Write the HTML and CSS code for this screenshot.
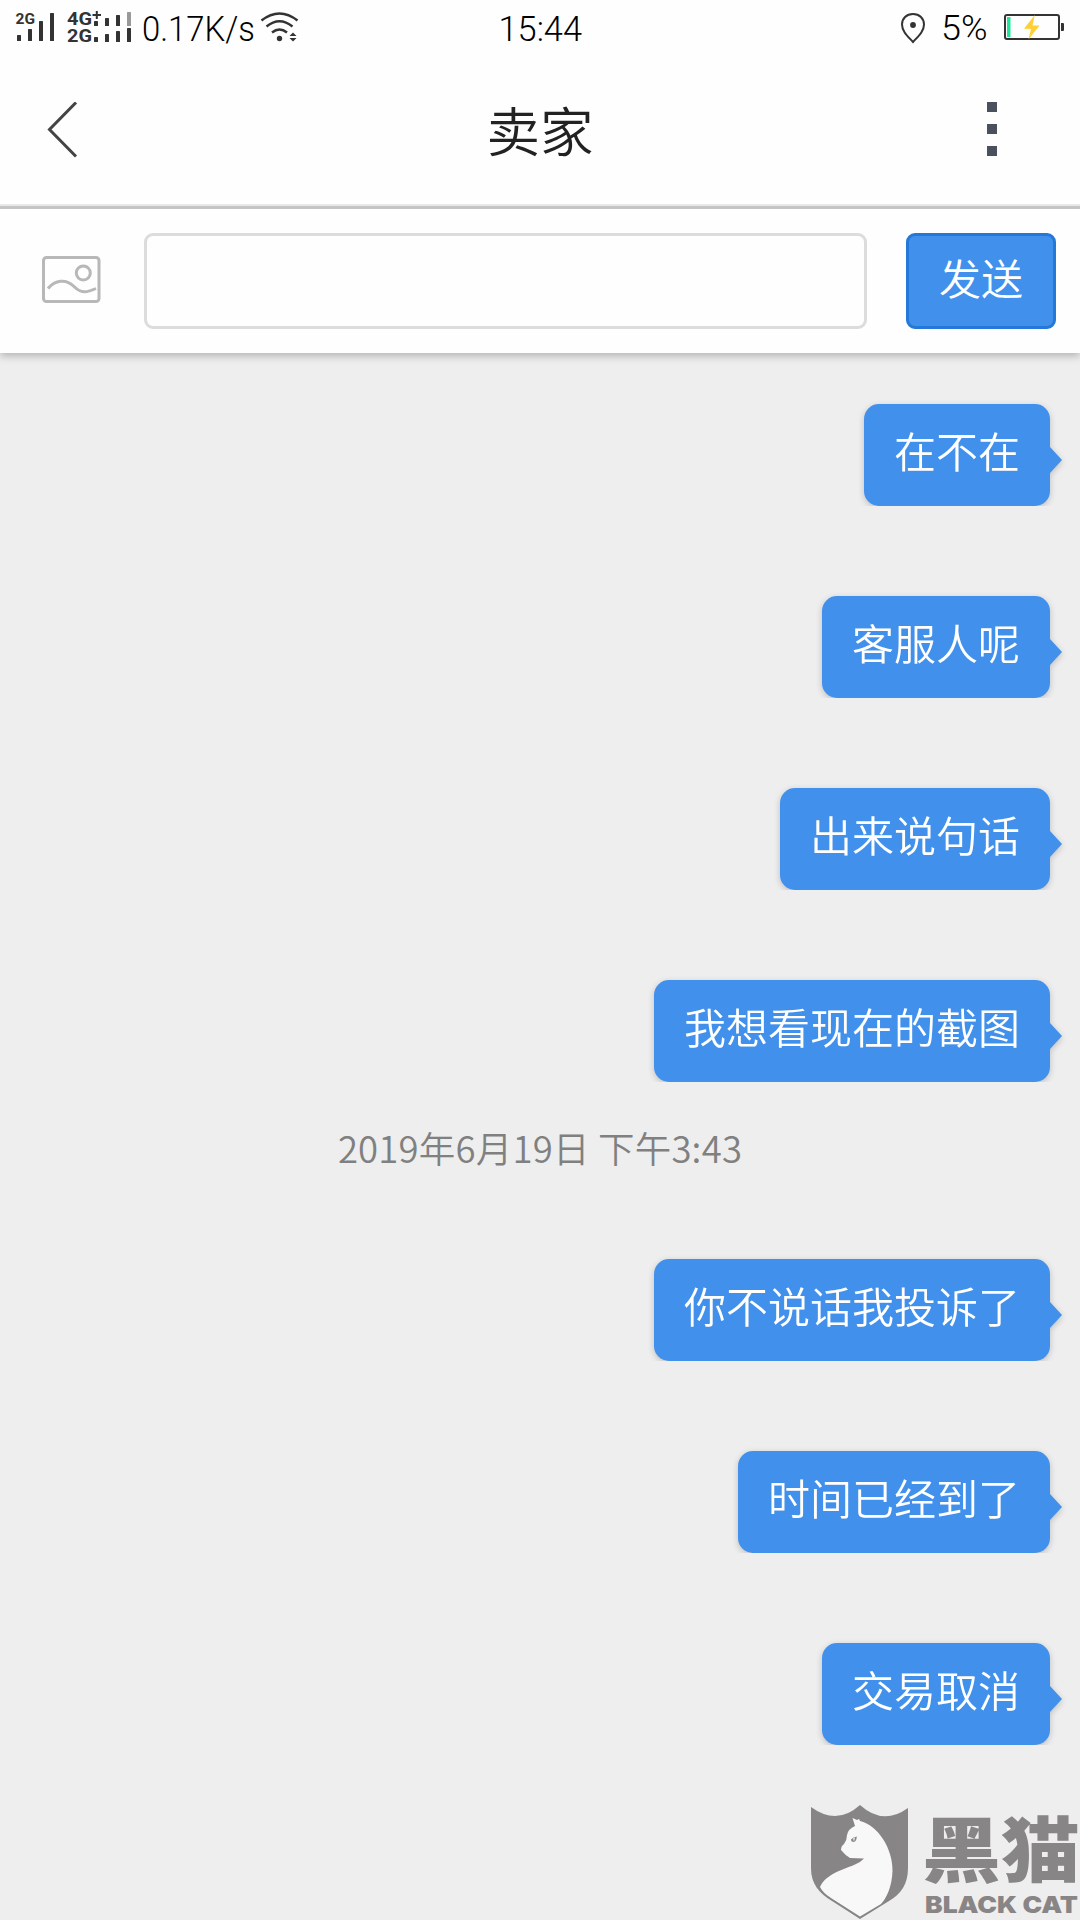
FILE: index.html
```html
<!DOCTYPE html>
<html lang="zh-CN">
<head>
<meta charset="utf-8">
<title>卖家</title>
<link rel="stylesheet" href="styles.css">
</head>
<body>
<div class="status">
  <svg class="status-left" width="310" height="60" viewBox="0 0 310 60">
    <g class="net">
      <text x="15.5" y="24" font-size="14.5" textLength="19.5" lengthAdjust="spacingAndGlyphs">2G</text>
      <text x="67" y="25.3" font-size="18.5" textLength="25" lengthAdjust="spacingAndGlyphs">4G</text>
      <text x="67" y="41.5" font-size="18.5" textLength="25" lengthAdjust="spacingAndGlyphs">2G</text>
    </g>
    <g fill="#333">
      <rect x="17" y="35" width="4" height="6" rx=".6"/><rect x="28" y="29" width="4" height="12" rx=".6"/><rect x="39" y="21" width="4" height="20" rx=".6"/><rect x="50" y="13" width="4" height="28" rx=".6"/>
      <path d="M92.5 14h8.5v2h-8.5zM95.8 11h2v8h-2z"/>
      <rect x="94" y="21" width="4" height="5" rx=".6"/><rect x="105" y="18" width="4" height="8" rx=".6"/><rect x="116" y="15" width="4" height="11" rx=".6"/><rect x="127" y="12" width="4" height="14" rx=".6" fill="#999"/>
      <rect x="94" y="37" width="4" height="5" rx=".6"/><rect x="105" y="34" width="4" height="8" rx=".6"/><rect x="116" y="31" width="4" height="11" rx=".6"/><rect x="127" y="28" width="4" height="14" rx=".6"/>
      <circle cx="279.5" cy="38.5" r="2.7"/>
      <path d="M289.5 36l3.5-3.5 3.5 3.5zM289.5 38h7l-3.5 3.5z"/>
    </g>
    <text class="digits" x="142" y="40.5" textLength="113" lengthAdjust="spacingAndGlyphs">0.17K/s</text>
    <g fill="none" stroke="#333" stroke-width="2.5">
      <path d="M261.500 20.500Q279.500 6.500 297.500 20.500"/><path d="M266.500 26.500Q279.500 16 292.500 26.500"/><path d="M272 32.500Q279.500 26.500 287 32.500"/>
    </g>
  </svg>
  <svg class="status-time" width="100" height="60" viewBox="0 0 100 60">
    <text class="digits" x="5.5" y="41.2" textLength="83.5" lengthAdjust="spacingAndGlyphs">15:44</text>
  </svg>
  <svg class="status-right" width="190" height="60" viewBox="0 0 190 60">
    <path d="M23 14C16.500 14 12 18.500 12 24.500C12 31.500 18 36.500 23 42C28 36.500 34 31.500 34 24.500C34 18.500 29.500 14 23 14Z" fill="none" stroke="#333" stroke-width="2"/>
    <circle cx="23" cy="25" r="2.900" fill="#333"/>
    <text class="digits" x="51" y="39.500" textLength="46.500" lengthAdjust="spacingAndGlyphs">5%</text>
    <rect x="115" y="15" width="54" height="24" rx="2" fill="none" stroke="#333" stroke-width="2"/>
    <rect x="117" y="17" width="3.500" height="20" fill="#1fe69b"/>
    <path d="M171 23h2q1 0 1 1v6q0 1-1 1h-2z" fill="#333"/>
    <path d="M144.800 15L134 28.700H141L138.500 39.500L149.500 25.500H142.500Z" fill="#ffcf33"/>
  </svg>
</div>
<header class="header">
  <svg class="back" width="32" height="56" viewBox="0 0 32 56"><path d="M30 .5L3.500 27.500L30 54.500" fill="none" stroke="#444" stroke-width="3"/></svg>
  <h1 class="title">卖家</h1>
  <div class="more"><i></i><i></i><i></i></div>
</header>
<div class="composer">
  <svg class="photo" width="60" height="48" viewBox="0 0 60 48" fill="none" stroke="#b8b8b8" stroke-width="3">
    <rect x="1.500" y="1.500" width="55.500" height="44" rx="3"/><circle cx="41.300" cy="17" r="7"/>
    <path d="M6 32.500C13 24 24 22.500 32 30.500S46 36 54 32.500"/>
  </svg>
  <div class="field"></div>
  <button class="send">发送</button>
</div>
<main class="chat">
  <div class="row"><div class="bubble">在不在</div></div>
  <div class="row"><div class="bubble">客服人呢</div></div>
  <div class="row"><div class="bubble">出来说句话</div></div>
  <div class="row"><div class="bubble">我想看现在的截图</div></div>
  <time class="date">2019年6月19日 下午3:43</time>
  <div class="row"><div class="bubble">你不说话我投诉了</div></div>
  <div class="row"><div class="bubble">时间已经到了</div></div>
  <div class="row"><div class="bubble">交易取消</div></div>
</main>
<svg class="brand" width="290" height="140" viewBox="0 0 290 140">
  <path d="M21 27Q47 46 70 25Q93 46 118 28V88C118 104 111 114 99 121L70 139L42 121C29 113 21 104 21 88Z" fill="#888586"/>
  <path d="M30 107C36 94 52 90 64 85Q70 83 74 78.500L60 78Q55 75 51 70Q51 66 54 64Q57 60 57 55Q58 49 65 46L62.500 38L67 40L69 39L70 41C88 45 103 69 102.500 91C102 107 96 119 91 124L70 136.500L41 118Q33 113 30 107Z" fill="#f8f8f8"/>
  <path d="M61 59.500Q62.500 57.500 66.800 56.500Q66.500 61 64 62Q61 62 61 59.500Z" fill="#888586"/><path d="M63 58.500l1 3l1-4z" fill="#f8f8f8"/>
  <g fill="#888586">
    <text class="brand-cn" x="132" y="95.500" textLength="158" lengthAdjust="spacingAndGlyphs">黑猫</text>
    <text class="brand-en" x="135" y="132.500" textLength="153" lengthAdjust="spacingAndGlyphs">BLACK CAT</text>
  </g>
</svg>
</body>
</html>
```
FILE: styles.css
```css
* { box-sizing: border-box; }
body {
  margin: 0;
  width: 1080px;
  height: 1920px;
  position: relative;
  overflow: hidden;
  background: #eee;
  font-family: "Noto Sans CJK SC", sans-serif;
  font-weight: 350;
}
svg { display: block; flex: none; }
.status {
  height: 60px;
  background: #fefefe;
  display: grid;
  grid-template-columns: 493px 397px 190px;
}
.digits { font: 350 34.5px Roboto, sans-serif; fill: #000; }
.net { font-family: Roboto, sans-serif; font-weight: 700; fill: #333; }
.header {
  position: relative;
  z-index: 1;
  height: 149px;
  background: #fefefe;
  border-bottom: 3px solid #c5c5c5;
  box-shadow: inset 0 -2px #e8e8e8;
  display: grid;
  grid-template-columns: 80px 1fr 80px;
  padding: 0 46px 0 46px;
  align-items: start;
}
.back { margin-top: 42px; }
.title {
  margin: 31px 0 0;
  text-align: center;
  font-size: 53.5px;
  line-height: 76px;
  font-weight: 350;
  color: #222;
}
.more {
  display: flex;
  flex-direction: column;
  gap: 12.4px;
  margin: 41.6px 0 0 33px;
}
.more i { width: 10px; height: 10px; background: #4b505d; }
.composer {
  position: relative;
  height: 144px;
  background: #fefefe;
  display: flex;
  align-items: center;
  padding: 0 24px 0 42px;
  box-shadow: 0 3px 8px rgba(0, 0, 0, .25);
}
.photo { margin: -2px 42px 0 0; }
.field {
  width: 723px;
  height: 96px;
  border: 3px solid #dcdcdc;
  border-radius: 9px;
}
.send {
  margin-left: auto;
  width: 150px;
  height: 96px;
  padding: 0 0 10px;
  border: 3px solid #2378d9;
  border-radius: 9px;
  background: #4190eb;
  color: #fff;
  font: inherit;
  font-size: 42px;
}
.chat { padding: 51px 30px 0; }
.row {
  display: flex;
  justify-content: flex-end;
  height: 102px;
  margin-bottom: 90px;
}
.bubble {
  position: relative;
  padding: 0 30px;
  border-radius: 15px;
  background: #4190eb;
  color: #fff;
  font-size: 42px;
  line-height: 92px;
  filter: drop-shadow(0 2px 3px rgba(0, 0, 0, .2));
  clip-path: inset(-6px -20px 0 -6px);
}
.bubble::after {
  content: "";
  position: absolute;
  left: 100%;
  top: 43px;
  width: 12px;
  height: 26px;
  background: #4190eb;
  clip-path: polygon(0 0, 100% 50%, 0 100%);
}
.date {
  display: block;
  height: 52px;
  margin: -50px 0 85px;
  text-align: center;
  font-size: 36.5px;
  line-height: 52px;
  letter-spacing: .2px;
  color: #808080;
}
.brand { position: absolute; left: 790px; top: 1780px; }
.brand-cn { font: 900 71px "Noto Sans CJK SC", sans-serif; }
.brand-en { font: 900 23px Inter, sans-serif; }
```
